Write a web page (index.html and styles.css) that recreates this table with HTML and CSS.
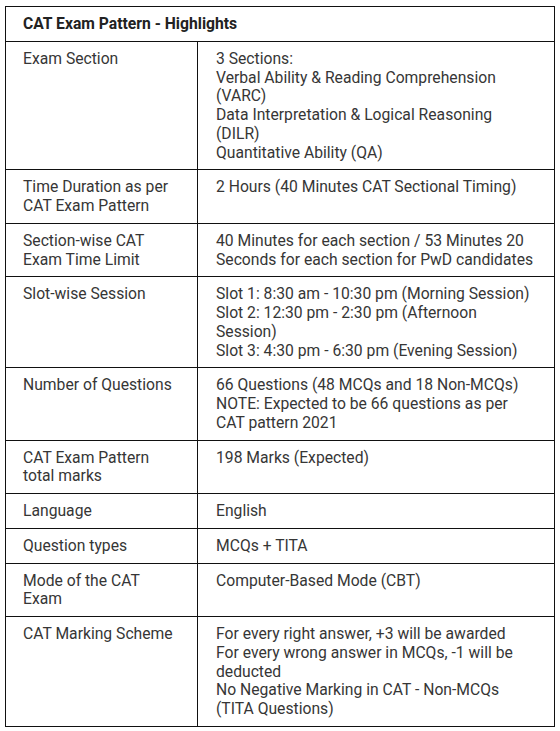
FILE: index.html
```html
<!DOCTYPE html>
<html>
<head>
<meta charset="utf-8">
<link rel="stylesheet" href="styles.css">
</head>
<body>
<div class="wrap">
<table class="pattern">
  <colgroup>
    <col class="col-label">
    <col class="col-value">
  </colgroup>
  <thead>
    <tr><th colspan="2">CAT Exam Pattern - Highlights</th></tr>
  </thead>
  <tbody>
    <tr><td class="label">Exam Section</td><td class="value">3 Sections:<br>Verbal Ability &amp; Reading Comprehension (VARC)<br>Data Interpretation &amp; Logical Reasoning (DILR)<br>Quantitative Ability (QA)</td></tr>
    <tr><td class="label">Time Duration as per CAT Exam Pattern</td><td class="value">2 Hours (40 Minutes CAT Sectional Timing)</td></tr>
    <tr><td class="label">Section-wise CAT Exam Time Limit</td><td class="value">40 Minutes for each section / 53 Minutes 20 Seconds for each section for PwD candidates</td></tr>
    <tr><td class="label">Slot-wise Session</td><td class="value">Slot 1: 8:30 am - 10:30 pm (Morning Session)<br>Slot 2: 12:30 pm - 2:30 pm (Afternoon Session)<br>Slot 3: 4:30 pm - 6:30 pm (Evening Session)</td></tr>
    <tr><td class="label">Number of Questions</td><td class="value">66 Questions (48 MCQs and 18 Non-MCQs)<br>NOTE: Expected to be 66 questions as per CAT pattern 2021</td></tr>
    <tr><td class="label">CAT Exam Pattern total marks</td><td class="value">198 Marks (Expected)</td></tr>
    <tr><td class="label">Language</td><td class="value">English</td></tr>
    <tr><td class="label">Question types</td><td class="value">MCQs + TITA</td></tr>
    <tr><td class="label">Mode of the CAT Exam</td><td class="value">Computer-Based Mode (CBT)</td></tr>
    <tr><td class="label">CAT Marking Scheme</td><td class="value">For every right answer, +3 will be awarded<br>For every wrong answer in MCQs, -1 will be deducted<br>No Negative Marking in CAT - Non-MCQs (TITA Questions)</td></tr>
  </tbody>
</table>
</div>
</body>
</html>
```
FILE: styles.css
```css
html, body {
  margin: 0;
  padding: 0;
  background: #fff;
}
.wrap {
  padding: 6px 5px;
}
.pattern {
  width: 550px;
  table-layout: fixed;
  border-collapse: collapse;
  font-family: Roboto, "Liberation Sans", sans-serif;
  font-size: 15.7px;
  line-height: 18.75px;
  color: #363636;
}
.col-label {
  width: 192px;
}
.pattern th,
.pattern td {
  border: 1px solid #111;
  padding: 8px 16px 7px 17px;
  text-align: left;
  vertical-align: top;
}
.pattern th {
  font-weight: 700;
  color: #222;
}
.pattern td.label {
  padding-right: 22px;
}
.pattern td.value {
  padding-left: 18px;
  padding-right: 17px;
}
```
